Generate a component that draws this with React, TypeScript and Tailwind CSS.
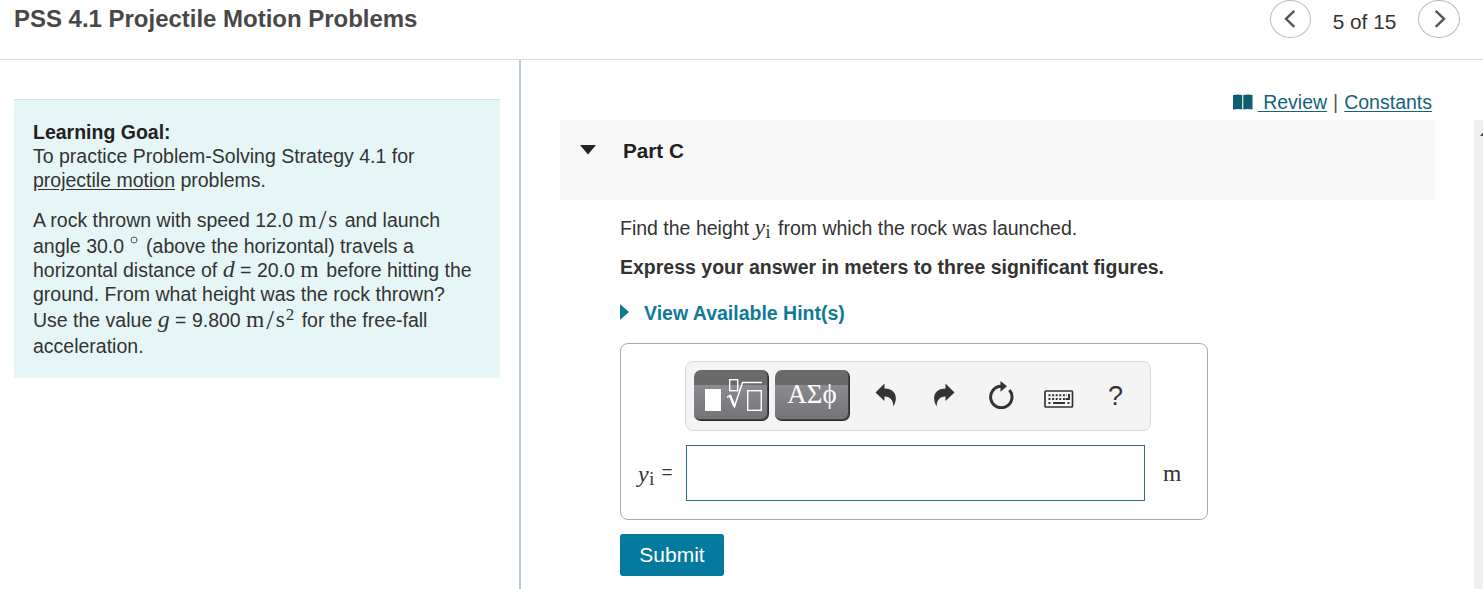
import type { ReactNode } from "react";

const Unit = ({ children }: { children: ReactNode }) => (
  <span className="font-['Liberation_Serif',serif] text-[23.5px] leading-[0] tracking-[0.8px]">
    {children}
  </span>
);

const Slash = () => (
  <span className="relative top-[2px] px-[1px] text-[28px] leading-[0]">/</span>
);

const Variable = ({ children }: { children: ReactNode }) => (
  <span className="font-['Liberation_Serif',serif] text-[24px] leading-[0] italic">
    {children}
  </span>
);

const Header = () => (
  <header className="flex h-[60px] justify-between border-b border-[#dcdcdc] pl-[14px] pr-[23px]">
    <h1 className="text-[24px] leading-[38px] font-bold tracking-[-0.02px] text-[#484848]">
      PSS 4.1 Projectile Motion Problems
    </h1>
    <nav className="flex h-[38px] items-center">
      <button className="flex h-[38px] w-[41px] items-center justify-center rounded-[50%] border border-[#b9b9b9]">
        <svg className="mr-[2px]" width="12" height="20" viewBox="0 0 12 20" fill="none">
          <path d="M10.3 1.8 2 9.8 10.3 17.8" stroke="#555" strokeWidth="2.4" />
        </svg>
      </button>
      <span className="w-[107px] pt-[5px] text-center text-[20.8px] text-[#333]">
        5 of 15
      </span>
      <button className="flex h-[38px] w-[42px] items-center justify-center rounded-[50%] border border-[#b9b9b9]">
        <svg className="ml-[2px]" width="12" height="20" viewBox="0 0 12 20" fill="none">
          <path d="M1.7 1.8 10 9.8 1.7 17.8" stroke="#555" strokeWidth="2.4" />
        </svg>
      </button>
    </nav>
  </header>
);

const LearningGoal = () => (
  <section className="h-[279px] border-t border-[#cfe3e3] bg-[#e6f6f7] pt-5 pl-[19px] text-[19.5px] whitespace-nowrap text-[#333]">
    <h2 className="leading-6 font-bold text-[#222]">Learning Goal:</h2>
    <p className="leading-6">To practice Problem-Solving Strategy 4.1 for</p>
    <p className="leading-6">
      <a className="underline underline-offset-2">projectile motion</a> problems.
    </p>
    <div className="mt-4">
      <p className="h-[26px] leading-[24px]">
        A rock thrown with speed 12.0{" "}
        <Unit>
          m<Slash />s
        </Unit>{" "}
        <span className="pl-[1px]">and launch</span>
      </p>
      <p className="flex h-[24px] leading-[24px]">
        angle 30.0
        <svg className="mt-[2px] mr-[8px] ml-[6px]" width="8" height="8" viewBox="0 0 8 8">
          <circle cx="4" cy="4" r="3" fill="none" stroke="#555" />
        </svg>
        (above the horizontal) travels a
      </p>
      <p className="h-[24px] leading-[24px]">
        horizontal distance of <Variable>d</Variable> = 20.0 <Unit>m</Unit>{" "}
        <span className="pl-[1.5px]">before hitting the</span>
      </p>
      <p className="h-[26px] leading-[24px]">
        ground. From what height was the rock thrown?
      </p>
      <p className="h-[26px] leading-[24px]">
        Use the value <Variable>g</Variable> = 9.800{" "}
        <Unit>
          m<Slash />s
        </Unit>
        <span className="relative -top-[7px] font-['Liberation_Serif',serif] text-[17px] leading-[0]">
          2
        </span>{" "}
        <span className="pl-[2px]">for the free-fall</span>
      </p>
      <p className="leading-[24px]">acceleration.</p>
    </div>
  </section>
);

const HeightSymbol = () => (
  <>
    <Variable>y</Variable>
    <span className="relative top-[3px] pr-[2px] pl-[0.5px] font-['Liberation_Serif',serif] text-[18px] leading-[0]">
      i
    </span>
  </>
);

const Toolbar = () => (
  <div className="flex h-[70px] w-[466px] items-start rounded-lg border border-[#d8d8d8] bg-[#f4f4f4] pt-2 pl-2">
    <button className="h-[51px] w-[75px] rounded-[7px] border-r border-b border-[#2b2b2b] bg-[linear-gradient(#6a6a6b_0,#6a6a6b_15px,#8b8b90_15px,#737377_100%)] shadow-[inset_-1px_-1px_0_#444]">
      <svg className="-mt-[2px]" width="73" height="49" viewBox="0 0 73 49" fill="none">
        <rect x="11" y="19" width="16" height="22" fill="#fff" />
        <rect x="35.7" y="9.7" width="8" height="11" stroke="#fff" strokeWidth="1.4" />
        <path d="M33 27.5 36 25.5 40.5 36.5 48.5 12.5H68" stroke="#fff" strokeWidth="1.5" />
        <path d="M36 25.5 40.5 36.5" stroke="#fff" strokeWidth="2.4" />
        <rect x="53.7" y="20.7" width="13.6" height="19.6" stroke="#fff" strokeWidth="1.4" />
      </svg>
    </button>
    <button className="ml-[6px] h-[51px] w-[75px] rounded-[7px] border-r border-b border-[#2b2b2b] bg-[linear-gradient(#6a6a6b_0,#6a6a6b_15px,#8b8b90_15px,#737377_100%)] pb-[2px] font-['Liberation_Serif',serif] text-[27px] leading-[47px] text-white shadow-[inset_-1px_-1px_0_#444]">
      ΑΣϕ
    </button>
    <svg className="mt-[13px] ml-[25px]" width="22" height="24" viewBox="0 0 22 24">
      <path d="M.5 9.5 9.5 .5V5.5C17 5.5 21.3 10 20.8 16 20.5 19 19.8 21 18.4 23.2 18 17 15.5 13.8 9.5 13.5V18Z" fill="#333" />
    </svg>
    <svg className="mt-[13px] ml-[36px]" width="22" height="24" viewBox="0 0 22 24">
      <path d="M21.5 9.5 12.5 .5V5.5C5 5.5 .7 10 1.2 16 1.5 19 2.2 21 3.6 23.2 4 17 6.5 13.8 12.5 13.5V18Z" fill="#333" />
    </svg>
    <svg className="mt-[11px] ml-[33px]" width="26" height="28" viewBox="0 0 26 28">
      <path d="M13 5.3A10.7 10.7 0 1 0 21.4 9" fill="none" stroke="#333" strokeWidth="3" />
      <path d="M12.5 0 19 5.3 12.5 10.8Z" fill="#333" />
    </svg>
    <svg className="mt-[20px] ml-[30px]" width="30" height="19" viewBox="0 0 30 19">
      <rect x="1" y="1" width="27.5" height="16" rx="1" fill="#f8f8f8" stroke="#333" strokeWidth="1.7" />
      <path d="M4.5 5.2H23M4.5 9H21" stroke="#333" strokeWidth="2" strokeDasharray="2 1.6" />
      <path d="M25 4V9H21.5M4.5 13H6.5M9 13H21M23.5 13H25.5" fill="none" stroke="#333" strokeWidth="2" />
    </svg>
    <span className="mt-[9px] ml-[34px] text-[27px] leading-[34px] text-[#333]">?</span>
  </div>
);

const AnswerBox = () => (
  <div className="mt-[18px] h-[177px] w-[588px] rounded-lg border border-[#aaa] pt-[17px]">
    <div className="pl-[64px]">
      <Toolbar />
    </div>
    <div className="mt-[14px] flex items-center text-[#333]">
      <label className="w-[65px] pt-[7px] pl-[17px] text-[19px] whitespace-nowrap">
        <HeightSymbol /> <span className="relative -top-[4px]">=</span>
      </label>
      <input className="h-[56px] w-[459px] border border-[#2c7286] bg-white outline-none" />
      <span className="ml-[18px] pt-[4px]">
        <Unit>m</Unit>
      </span>
    </div>
  </div>
);

const Part = () => (
  <main className="flex-1">
    <div className="flex h-[60px] items-end justify-end pr-[51px] pb-[3px] text-[19.5px] text-[#555]">
      <svg className="mr-[5px] mb-[7px]" width="20" height="16" viewBox="0 0 20 16">
        <path d="M0 1Q5 0 9.2 1V15.5Q5 14.5 0 15.5ZM10.3 1Q15 0 19.5 1V15.5Q15 14.5 10.3 15.5Z" fill="#0d5d73" />
      </svg>
      <a className="whitespace-pre text-[#13637a] underline underline-offset-2"> Review</a>
      <span className="px-[6px]">|</span>
      <a className="text-[#13637a] underline underline-offset-2">Constants</a>
    </div>
    <div className="flex justify-between">
      <div className="ml-[39px] w-[875px]">
        <div className="flex h-20 items-start bg-[#f8f8f8] pl-5">
          <svg className="mt-[25px]" width="17" height="10" viewBox="0 0 17 10">
            <path d="M0 0H16L8 9.5Z" fill="#222" />
          </svg>
          <h2 className="mt-[19px] ml-[26px] text-[20.7px] leading-6 font-bold text-[#222]">
            Part C
          </h2>
        </div>
        <div className="pl-[60px] text-[19.5px] text-[#333]">
          <p className="mt-4 h-6 leading-6">
            Find the height <HeightSymbol /> from which the rock was launched.
          </p>
          <p className="mt-[15px] leading-6 font-bold">
            Express your answer in meters to three significant figures.
          </p>
          <div className="mt-[22px] flex items-center leading-6 font-bold text-[#0f7a96]">
            <svg className="mr-[14px] mb-[2px]" width="10" height="16" viewBox="0 0 10 16">
              <path d="M0 0 9 8 0 16Z" fill="#0f7a96" />
            </svg>
            View Available Hint(s)
          </div>
          <AnswerBox />
          <button className="mt-[14px] h-[42px] w-[104px] rounded-[3px] bg-[#047a9c] text-[21px] text-white">
            Submit
          </button>
        </div>
      </div>
      <div className="h-[469px] w-[9px] bg-[#f0f0f0] pt-3">
        <svg className="ml-auto" width="3" height="4" viewBox="0 0 3 4">
          <path d="M0 4 3 0.5V4Z" fill="#444" />
        </svg>
      </div>
    </div>
  </main>
);

const App = () => (
  <div className="h-[589px] w-[1483px] overflow-hidden bg-white font-['Liberation_Sans',Arial,sans-serif]">
    <Header />
    <div className="flex h-[529px]">
      <aside className="w-[521px] border-r-2 border-[#bcc9d6] pt-[39px] pr-[19px] pl-[14px]">
        <LearningGoal />
      </aside>
      <Part />
    </div>
  </div>
);

export default App;
